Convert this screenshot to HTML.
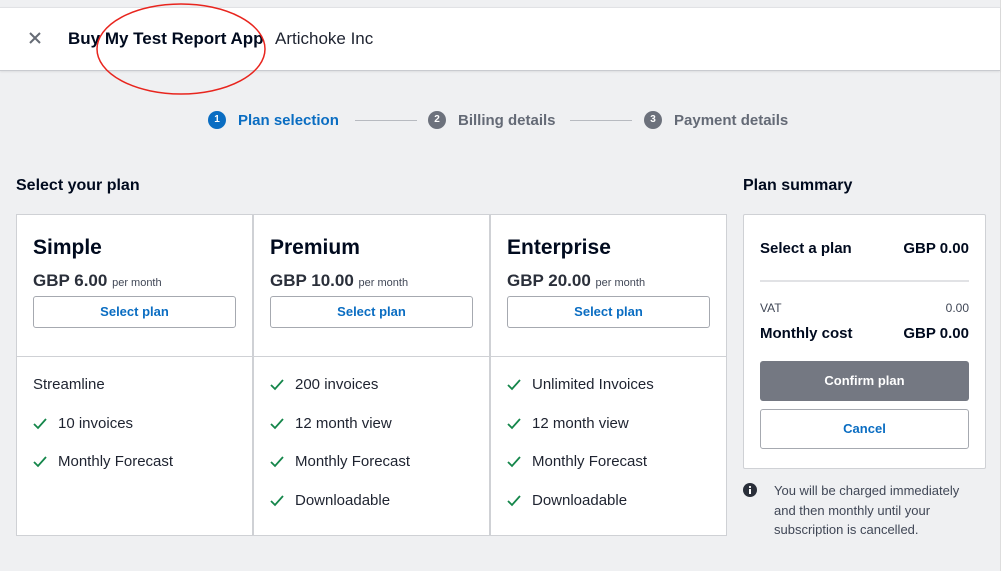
<!DOCTYPE html>
<html><head><style>
*{box-sizing:border-box;margin:0;padding:0}
body{width:1007px;height:571px;background:#eff0f2;font-family:"Liberation Sans",Arial,sans-serif;color:#000a1e;position:relative;overflow:hidden}
.a{position:absolute}
.hdr{left:0;top:7px;width:1000px;height:64px;background:#fff;border-top:1px solid #e1e2e5;border-bottom:1px solid #c9cbd0;box-shadow:0 1px 2px rgba(0,0,0,.08)}
.card{background:#fff;border:1px solid #cfd1d5}
.plan{top:214px;width:237px;height:322px}
.plan h2{position:absolute;left:16px;top:21px;font-size:21px;font-weight:bold}
.price{position:absolute;left:16px;top:56px;font-size:17px;font-weight:bold;color:#2a2f3a}
.price small{font-size:11px;font-weight:normal;color:#404756}
.btn{position:absolute;left:16px;top:81px;width:203px;height:32px;border:1px solid #a6a9b0;border-radius:3px;color:#0a6dc2;font-weight:bold;font-size:13px;text-align:center;line-height:30px}
.div{position:absolute;left:0;right:0;top:141px;border-top:1px solid #cfd1d5}
.f{position:absolute;left:16px;font-size:15px;color:#1e2330}
.f.c{left:41px}
.ck{position:absolute;left:16px;width:14px;height:14px}
.step{top:111px;height:18px;display:flex;align-items:center;font-size:15px;font-weight:bold;color:#646a76}
.dot{display:inline-block;width:18px;height:18px;border-radius:50%;background:#6c717c;color:#fff;font-size:10px;text-align:center;line-height:18px;margin-right:12px}
</style></head><body>
<div class="a" style="left:1000px;top:0;width:7px;height:571px;background:#fff;border-left:1px solid #ddd"></div>
<div class="a hdr"></div>
<svg class="a" style="left:28px;top:31px" width="14" height="14"><path d="M2 2L12 12M12 2L2 12" stroke="#666b75" stroke-width="2"/></svg>
<div class="a" style="left:68px;top:29px;font-size:17px;font-weight:bold">Buy My Test Report App</div>
<div class="a" style="left:275px;top:29px;font-size:17px;color:#1e2330">Artichoke Inc</div>
<svg class="a" style="left:90px;top:0" width="182" height="100"><ellipse cx="91" cy="49" rx="84" ry="45" fill="none" stroke="#e8251e" stroke-width="1.5"/></svg>

<div class="a step" style="left:208px;color:#0a6dc2"><span class="dot" style="background:#0a6dc2">1</span>Plan selection</div>
<div class="a" style="left:355px;top:120px;width:62px;border-top:1px solid #b7bac0"></div>
<div class="a step" style="left:428px"><span class="dot">2</span>Billing details</div>
<div class="a" style="left:570px;top:120px;width:62px;border-top:1px solid #b7bac0"></div>
<div class="a step" style="left:644px"><span class="dot">3</span>Payment details</div>

<div class="a" style="left:16px;top:177px;font-size:16px;font-weight:bold">Select your plan</div>
<div class="a" style="left:743px;top:177px;font-size:16px;font-weight:bold">Plan summary</div>

<div class="a card plan" style="left:16px">
<h2>Simple</h2><div class="price">GBP 6.00 <small>per month</small></div><div class="btn">Select plan</div><div class="div"></div>
<div class="f" style="top:161px">Streamline</div>
<svg class="ck" style="top:202px"><path d="M1 7l4 4 8-9" fill="none" stroke="#14864a" stroke-width="1.8"/></svg><div class="f c" style="top:200px">10 invoices</div>
<svg class="ck" style="top:240px"><path d="M1 7l4 4 8-9" fill="none" stroke="#14864a" stroke-width="1.8"/></svg><div class="f c" style="top:238px">Monthly Forecast</div>
</div>
<div class="a card plan" style="left:253px">
<h2>Premium</h2><div class="price">GBP 10.00 <small>per month</small></div><div class="btn">Select plan</div><div class="div"></div>
<svg class="ck" style="top:163px"><path d="M1 7l4 4 8-9" fill="none" stroke="#14864a" stroke-width="1.8"/></svg><div class="f c" style="top:161px">200 invoices</div>
<svg class="ck" style="top:202px"><path d="M1 7l4 4 8-9" fill="none" stroke="#14864a" stroke-width="1.8"/></svg><div class="f c" style="top:200px">12 month view</div>
<svg class="ck" style="top:240px"><path d="M1 7l4 4 8-9" fill="none" stroke="#14864a" stroke-width="1.8"/></svg><div class="f c" style="top:238px">Monthly Forecast</div>
<svg class="ck" style="top:279px"><path d="M1 7l4 4 8-9" fill="none" stroke="#14864a" stroke-width="1.8"/></svg><div class="f c" style="top:277px">Downloadable</div>
</div>
<div class="a card plan" style="left:490px">
<h2>Enterprise</h2><div class="price">GBP 20.00 <small>per month</small></div><div class="btn">Select plan</div><div class="div"></div>
<svg class="ck" style="top:163px"><path d="M1 7l4 4 8-9" fill="none" stroke="#14864a" stroke-width="1.8"/></svg><div class="f c" style="top:161px">Unlimited Invoices</div>
<svg class="ck" style="top:202px"><path d="M1 7l4 4 8-9" fill="none" stroke="#14864a" stroke-width="1.8"/></svg><div class="f c" style="top:200px">12 month view</div>
<svg class="ck" style="top:240px"><path d="M1 7l4 4 8-9" fill="none" stroke="#14864a" stroke-width="1.8"/></svg><div class="f c" style="top:238px">Monthly Forecast</div>
<svg class="ck" style="top:279px"><path d="M1 7l4 4 8-9" fill="none" stroke="#14864a" stroke-width="1.8"/></svg><div class="f c" style="top:277px">Downloadable</div>
</div>

<div class="a card" style="left:743px;top:214px;width:243px;height:255px;border-radius:2px">
<div class="a" style="left:16px;top:25px;font-size:15px;font-weight:bold">Select a plan</div>
<div class="a" style="right:16px;top:25px;font-size:15px;font-weight:bold">GBP 0.00</div>
<div class="a" style="left:16px;right:16px;top:65px;border-top:2px solid #e1e2e5"></div>
<div class="a" style="left:16px;top:86px;font-size:12px;color:#404756">VAT</div>
<div class="a" style="right:16px;top:86px;font-size:12px;color:#404756">0.00</div>
<div class="a" style="left:16px;top:110px;font-size:15px;font-weight:bold">Monthly cost</div>
<div class="a" style="right:16px;top:110px;font-size:15px;font-weight:bold">GBP 0.00</div>
<div class="a" style="left:16px;top:146px;width:209px;height:40px;background:#747882;border-radius:3px;color:#fff;font-weight:bold;font-size:13px;text-align:center;line-height:40px">Confirm plan</div>
<div class="a" style="left:16px;top:194px;width:209px;height:40px;border:1px solid #a6a9b0;border-radius:3px;color:#0a6dc2;font-weight:bold;font-size:13px;text-align:center;line-height:38px">Cancel</div>
</div>
<svg class="a" style="left:743px;top:483px" width="14" height="14"><circle cx="7" cy="7" r="7" fill="#2a2f3a"/><rect x="6" y="6" width="2" height="5" fill="#fff"/><circle cx="7" cy="4" r="1.1" fill="#fff"/></svg>
<div class="a" style="left:774px;top:481px;font-size:13px;line-height:19.5px;color:#404756;width:198px">You will be charged immediately and then monthly until your subscription is cancelled.</div>
</body></html>
